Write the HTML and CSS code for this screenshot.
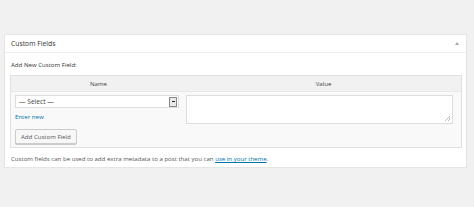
FILE: index.html
```html
<!DOCTYPE html>
<html>
<head>
<meta charset="utf-8">
<link rel="stylesheet" href="styles.css">
</head>
<body>
<div class="postbox">
  <div class="hndle">
    <span class="title">Custom Fields</span>
    <span class="toggle"></span>
  </div>
  <div class="inside">
    <p class="add-new">Add New Custom Field:</p>
    <div class="meta-table">
      <div class="thead">
        <div class="th name-col">Name</div>
        <div class="th value-col">Value</div>
      </div>
      <div class="tbody">
        <div class="left">
          <div class="select">
            <span class="select-text">— Select —</span>
            <span class="select-btn"><span class="select-arrow"></span></span>
          </div>
          <a class="enter-new" href="#">Enter new</a>
        </div>
        <div class="right">
          <div class="textarea"><span class="grip"></span></div>
        </div>
      </div>
      <div class="actions">
        <span class="button">Add Custom Field</span>
      </div>
    </div>
    <p class="note">Custom fields can be used to add extra metadata to a post that you can <a href="#">use in your theme</a>.</p>
  </div>
</div>
</body>
</html>
```
FILE: styles.css
```css
html, body {
  margin: 0;
  padding: 0;
  background: #f1f1f1;
  font-family: "Open Sans", "Liberation Sans", sans-serif;
  color: #555;
  font-size: 6.1px;
}
.postbox {
  margin: 34px 0 0 4px;
  width: 461px;
  height: 132px;
  background: #fff;
  border: 1px solid #e5e5e5;
  box-shadow: 0 1px 1px rgba(0,0,0,0.04);
}
.hndle {
  height: 17px;
  border-bottom: 1px solid #eee;
  display: flex;
  align-items: center;
  justify-content: space-between;
  padding: 0 7px 0 6px;
}
.title {
  font-size: 6.8px;
  color: #333;
}
.toggle {
  width: 0;
  height: 0;
  border-left: 2px solid transparent;
  border-right: 2px solid transparent;
  border-bottom: 3px solid #aaa;
}
.inside {
  padding: 0 4px 0 5px;
}
.add-new {
  margin: 0;
  padding-top: 7px;
  height: 15px;
  padding-left: 1px;
  color: #333;
}
.meta-table {
  height: 71px;
  border: 1px solid #e1e1e1;
  background: #f9f9f9;
}
.thead {
  display: flex;
  height: 15px;
  background: #f1f1f1;
  border-bottom: 1px solid #e9e9e9;
  align-items: center;
}
.th {
  text-align: center;
  color: #444;
}
.name-col { width: 175px; }
.value-col { flex: 1; }
.tbody {
  display: flex;
  padding: 3px 8px 0 4px;
}
.left {
  width: 164px;
}
.select {
  height: 11px;
  border: 1px solid #ddd;
  background: #fff;
  display: flex;
  align-items: center;
  justify-content: space-between;
  padding-left: 3px;
  color: #444;
  font-size: 6.6px;
}
.select-btn {
  width: 6px;
  height: 8px;
  border: 1px solid #888;
  background: #e8e8e8;
  margin-right: 1px;
  display: flex;
  align-items: center;
  justify-content: center;
}
.select-arrow {
  width: 3px;
  height: 1px;
  background: #222;
}
.enter-new {
  display: block;
  margin-top: 4px;
  color: #0073aa;
  text-decoration: none;
}
.right {
  flex: 1;
  padding-left: 7px;
}
.textarea {
  height: 27px;
  border: 1px solid #ddd;
  background: #fff;
  position: relative;
}
.grip {
  position: absolute;
  right: 2px;
  bottom: 2px;
  width: 5px;
  height: 5px;
  background: linear-gradient(135deg, transparent 45%, #bbb 45%, #bbb 55%, transparent 55%, transparent 70%, #bbb 70%, #bbb 80%, transparent 80%);
}
.actions {
  padding: 5px 4px 0 4px;
}
.button {
  display: inline-block;
  height: 13px;
  line-height: 13px;
  padding: 0 5px;
  border: 1px solid #ccc;
  background: #f7f7f7;
  border-radius: 2px;
  color: #555;
  box-shadow: 0 1px 0 #ccc;
}
.note {
  margin: 6px 0 0 1px;
  color: #555;
}
.note a {
  color: #0073aa;
}
```
